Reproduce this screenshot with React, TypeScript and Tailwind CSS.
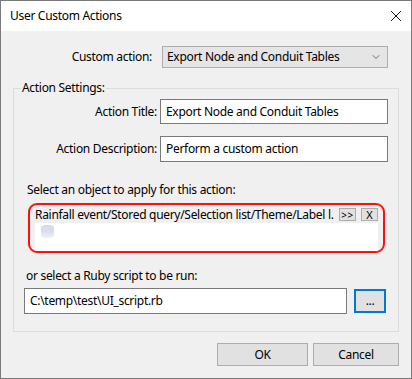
import { ChevronDown } from 'lucide-react';

function Field({ value, className }: { value: string; className: string }) {
  return (
    <div className={`flex items-center bg-white border border-[#7a7a7a] pl-[5px] ${className}`}>
      <span className="whitespace-nowrap">{value}</span>
    </div>
  );
}

function DbIcon() {
  return (
    <svg width="15" height="15" viewBox="0 0 15 15">
      <defs>
        <linearGradient id="cyl" x1="0" x2="0" y1="0" y2="1">
          <stop offset="0" stopColor="#c3cee2" />
          <stop offset="1" stopColor="#eef1f6" />
        </linearGradient>
      </defs>
      <path d="M1 4 Q1 1 7.5 1 Q14 1 14 4 L14 11 Q14 14 7.5 14 Q1 14 1 11 Z" fill="url(#cyl)" />
      <ellipse cx="7.5" cy="4" rx="6.2" ry="2.4" fill="#d8dfec" />
    </svg>
  );
}

export default function App() {
  return (
    <div className="w-[412px] h-[379px] border border-[#7a7a7a] bg-[#f0f0f0] text-[12px] tracking-[-0.3px] text-black font-['Noto_Sans',sans-serif] leading-[16px] overflow-hidden">
      {/* Title bar */}
      <div className="h-[30px] bg-white flex items-center justify-between pl-[9px] pr-[8px]">
        <span>User Custom Actions</span>
        <svg width="12" height="12" viewBox="0 0 12 12" className="mr-[1px]">
          <path d="M1 1 L11 11 M11 1 L1 11" stroke="#111" strokeWidth="1" />
        </svg>
      </div>

      {/* Custom action */}
      <div className="flex items-center mt-[15px]">
        <div className="w-[151px] text-right">Custom action:</div>
        <div className="ml-[10px] w-[226px] h-[22px] bg-[#e5e5e5] border border-[#adadad] flex items-center justify-between pl-[4px] pr-[5px]">
          <span>Export Node and Conduit Tables</span>
          <ChevronDown className="w-[12px] h-[12px] text-[#3c3c3c]" strokeWidth={1.4} />
        </div>
      </div>

      {/* Action settings group */}
      <fieldset className="ml-[12px] mt-[12px] w-[386px] h-[252px] border border-[#dcdcdc]">
        <legend className="ml-[7px] px-[1px]">Action Settings:</legend>

        <div className="flex items-center mt-[3px]">
          <div className="w-[143px] text-right">Action Title:</div>
          <Field value="Export Node and Conduit Tables" className="ml-[3px] w-[228px] h-[25px]" />
        </div>
        <div className="flex items-center mt-[12px]">
          <div className="w-[143px] text-right">Action Description:</div>
          <Field value="Perform a custom action" className="ml-[3px] w-[228px] h-[26px]" />
        </div>

        <div className="ml-[13px] mt-[20px]">Select an object to apply for this action:</div>

        <div className="ml-[14px] mt-[5px] w-[357px] h-[50px] border-2 border-[#ff1010] rounded-[9px] overflow-hidden flex flex-col px-[5px] pt-[2px]">
          <div className="flex items-center h-[15px]">
            <span className="flex-1 min-w-0 whitespace-nowrap overflow-hidden">Rainfall event/Stored query/Selection list/Theme/Label l.</span>
            <button className="ml-[2px] shrink-0 w-[17px] h-[13px] bg-[#e1e1e1] border border-[#adadad] text-[10px] tracking-[0.5px] leading-[10px] flex items-center justify-center">&gt;&gt;</button>
            <button className="ml-[5px] shrink-0 w-[17px] h-[13px] bg-[#e1e1e1] border border-[#adadad] text-[11px] tracking-normal leading-[10px] flex items-center justify-center">X</button>
          </div>
          <div className="flex-1 bg-white mt-[1px] pl-[5px] pt-[1px]">
            <DbIcon />
          </div>
        </div>

        <div className="ml-[12px] mt-[15px]">or select a Ruby script to be run:</div>
        <div className="flex items-center mt-[4px] ml-[10px]">
          <Field value="C:\temp\test\UI_script.rb" className="w-[323px] h-[26px]" />
          <button className="ml-[7px] w-[32px] h-[24px] bg-[#e1e1e1] border-2 border-[#0078d7] flex items-center justify-center">...</button>
        </div>
      </fieldset>

      {/* Buttons */}
      <div className="flex justify-end mt-[11px] mr-[12px] gap-[5px]">
        <button className="w-[91px] h-[23px] bg-[#e1e1e1] border border-[#adadad]">OK</button>
        <button className="w-[86px] h-[23px] bg-[#e1e1e1] border border-[#adadad]">Cancel</button>
      </div>
    </div>
  );
}
